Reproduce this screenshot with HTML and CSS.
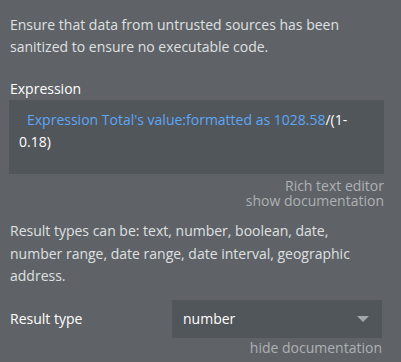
FILE: index.html
```html
<!DOCTYPE html>
<html lang="en">
<head>
    <meta charset="UTF-8">
    <title>Expression property</title>
    <link rel="stylesheet" href="styles.css">
</head>
<body>
    <div class="panel">
        <p class="doc-text">Ensure that data from untrusted sources has been sanitized to ensure no executable code.</p>

        <div class="field-label">Expression</div>
        <div class="expression-box">
            <span class="dynamic">Expression Total's value:formatted as 1028.58</span>/(1-0.18)
        </div>
        <div class="doc-links">
            <a class="doc-link">Rich text editor</a>
            <a class="doc-link">show documentation</a>
        </div>

        <p class="doc-text result-doc">Result types can be: text, number, boolean, date, number range, date range, date interval, geographic address.</p>

        <div class="select-row">
            <label class="row-label">Result type</label>
            <div class="select-box">
                <span>number</span>
                <span class="caret"></span>
            </div>
        </div>
        <div class="doc-links">
            <a class="doc-link">hide documentation</a>
        </div>
    </div>
</body>
</html>
```

FILE: styles.css
```css
* {
    margin: 0;
    padding: 0;
    box-sizing: border-box;
    font-family: 'Open Sans', 'Noto Sans', sans-serif;
}

body {
    background-color: #5f6367;
    color: #ffffff;
    font-size: 14px;
}

.panel {
    width: 384px;
    padding: 14px 0 0 9px;
}

.doc-text {
    color: #dfe0e1;
    line-height: 22px;
    padding-left: 1px;
}

.field-label {
    margin-top: 20px;
    line-height: 22px;
    padding-left: 1px;
}

.expression-box {
    background-color: #51565a;
    height: 74px;
    padding: 9px 10px 0 10px;
    line-height: 22px;
    color: #ffffff;
}

.dynamic {
    color: #5ea6f7;
    margin-left: 8px;
}

.doc-links {
    display: flex;
    flex-direction: column;
    align-items: flex-end;
    margin-top: 4px;
    line-height: 15px;
}

.doc-link {
    color: #aeb1b3;
    cursor: pointer;
}

.result-doc {
    margin-top: 12px;
    line-height: 22.5px;
}

.select-row {
    display: flex;
    align-items: center;
    margin-top: 12px;
    width: 373px;
}

.row-label {
    width: 163px;
    padding-left: 1px;
}

.select-box {
    flex: 1;
    height: 38px;
    background-color: #51565a;
    display: flex;
    align-items: center;
    justify-content: space-between;
    padding: 0 13px 0 11px;
}

.caret {
    width: 0;
    height: 0;
    border-left: 6px solid transparent;
    border-right: 6px solid transparent;
    border-top: 6px solid #a3a7aa;
}

.select-row + .doc-links {
    width: 373px;
    margin-top: 2px;
}
```
